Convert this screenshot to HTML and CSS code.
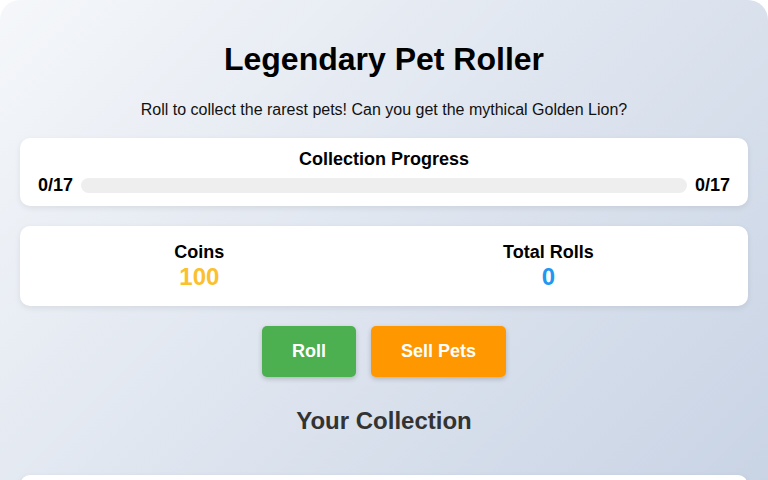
FILE: index.html
```html
<!DOCTYPE html>
<html lang="en">
<head>
<meta charset="utf-8">
<title>Legendary Pet Roller</title>
<link rel="stylesheet" href="styles.css">
</head>
<body>
<div class="app">
  <h1 class="title">Legendary Pet Roller</h1>
  <p class="subtitle">Roll to collect the rarest pets! Can you get the mythical Golden Lion?</p>

  <section class="card progress-card">
    <div class="progress-title">Collection Progress</div>
    <div class="progress-row">
      <span class="progress-count">0/17</span>
      <div class="progress-track"><div class="progress-fill" style="width:0%"></div></div>
      <span class="progress-count">0/17</span>
    </div>
  </section>

  <section class="card stats-card">
    <div class="stat">
      <div class="stat-label">Coins</div>
      <div class="stat-value coins">100</div>
    </div>
    <div class="stat">
      <div class="stat-label">Total Rolls</div>
      <div class="stat-value rolls">0</div>
    </div>
  </section>

  <div class="actions">
    <button class="btn btn-roll">Roll</button>
    <button class="btn btn-sell">Sell Pets</button>
  </div>

  <h2 class="section-title">Your Collection</h2>

  <section class="card collection-card"></section>
</div>
</body>
</html>
```

FILE: styles.css
```css
* { box-sizing: border-box; }

html, body {
  margin: 0;
  padding: 0;
  background: #ffffff;
}

body {
  font-family: "Liberation Sans", Arial, sans-serif;
  color: #000;
}

.app {
  min-height: 600px;
  padding: 20px 20px 40px;
  border-radius: 20px;
  background: linear-gradient(135deg, #f5f7fa 0%, #c3cfe2 100%);
  text-align: center;
}

.title {
  margin: 21px 0 23px;
  font-size: 32px;
  font-weight: bold;
  line-height: 37px;
}

.subtitle {
  margin: 0 0 19px;
  font-size: 16px;
  line-height: 18px;
  color: #111;
}

.card {
  background: #fff;
  border-radius: 10px;
  box-shadow: 0 2px 6px rgba(0, 0, 0, 0.08);
}

.progress-card {
  padding: 11px 18px 10px;
  margin-bottom: 20px;
}

.progress-title {
  font-size: 18px;
  font-weight: bold;
  line-height: 21px;
  margin-bottom: 5px;
}

.progress-row {
  display: flex;
  align-items: center;
  gap: 8px;
  height: 21px;
}

.progress-count {
  font-size: 18px;
  font-weight: bold;
  line-height: 21px;
}

.progress-track {
  flex: 1;
  height: 15px;
  border-radius: 8px;
  background: #eeeeee;
  overflow: hidden;
}

.progress-fill {
  height: 100%;
  background: #4caf50;
}

.stats-card {
  display: flex;
  justify-content: space-around;
  padding: 16px 15px 15px;
  margin-bottom: 20px;
}

.stat-label {
  font-size: 18px;
  font-weight: bold;
  line-height: 21px;
}

.stat-value {
  font-size: 24px;
  font-weight: bold;
  line-height: 28px;
}

.stat-value.coins { color: #fbc02d; }
.stat-value.rolls { color: #2196f3; }

.actions {
  display: flex;
  justify-content: center;
  gap: 15px;
  margin-bottom: 30px;
}

.btn {
  border: none;
  border-radius: 5px;
  padding: 15px 30px;
  font-family: inherit;
  font-size: 18px;
  font-weight: bold;
  line-height: 21px;
  color: #fff;
  box-shadow: 0 2px 5px rgba(0, 0, 0, 0.2);
  cursor: pointer;
}

.btn-roll { background: #4caf50; }
.btn-sell { background: #ff9800; }

.section-title {
  margin: 0 0 40px;
  font-size: 24px;
  font-weight: bold;
  line-height: 28px;
  color: #333;
}

.collection-card {
  min-height: 120px;
}
```
